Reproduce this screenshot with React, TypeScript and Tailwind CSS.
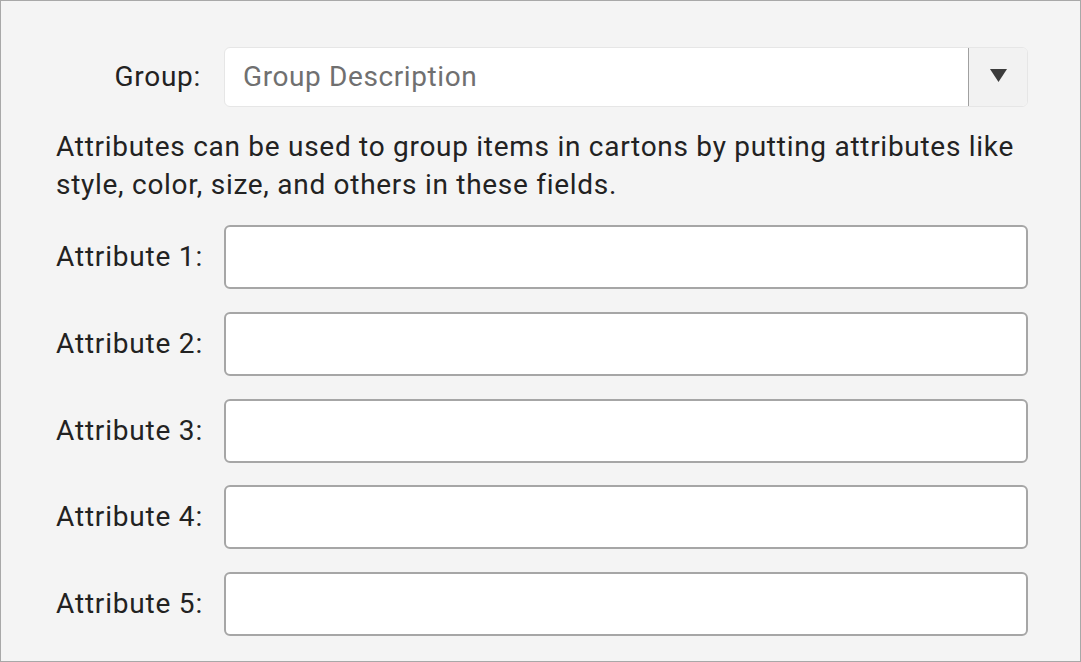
import React from 'react'

const font = { fontFamily: 'Roboto, "Noto Sans", Arial, sans-serif' }

function AttributeRow({ n }: { n: number }) {
  return (
    <div className="grid grid-cols-[168px_1fr] items-center">
      <label className="flex justify-end whitespace-nowrap pr-[21px] text-[28px] tracking-[0.8px] text-[#222222]">
        Attribute {n}:
      </label>
      <input
        type="text"
        className="h-[64px] w-full rounded-[6px] border-2 border-[#a6a6a6] bg-white px-4 text-[28px] outline-none"
      />
    </div>
  )
}

export default function App() {
  return (
    <div
      className="h-[662px] w-full overflow-hidden border border-[#a8a8a8] bg-[#f4f4f4] pl-[55px] pr-[52px] pt-[46px]"
      style={font}
    >
      <div className="grid grid-cols-[168px_1fr] items-center">
        <label className="flex justify-end whitespace-nowrap pr-[23px] text-[28px] tracking-[0.7px] text-[#222222]">
          Group:
        </label>
        <div className="flex h-[60px] overflow-hidden rounded-[6px] border border-[#e6e6e6] bg-white">
          <div className="flex flex-1 items-center pl-[18px] text-[28px] tracking-[0.6px] text-[#707070]">
            Group Description
          </div>
          <div className="flex w-[59px] items-center justify-center border-l border-[#a0a0a0] bg-[#f2f2f2]">
            <svg width="17" height="13" viewBox="0 0 17 13" className="-mt-[3px]">
              <path d="M0 0 H17 L8.5 13 Z" fill="#3c3c3c" />
            </svg>
          </div>
        </div>
      </div>

      <p className="mt-[21px] text-[28px] leading-[38px] tracking-[0.72px] text-[#222222]">
        Attributes can be used to group items in cartons by putting attributes like style, color, size, and others in these fields.
      </p>

      <div className="mt-[21px] flex flex-col gap-[22.75px]">
        {[1, 2, 3, 4, 5].map((n) => (
          <AttributeRow key={n} n={n} />
        ))}
      </div>
    </div>
  )
}
